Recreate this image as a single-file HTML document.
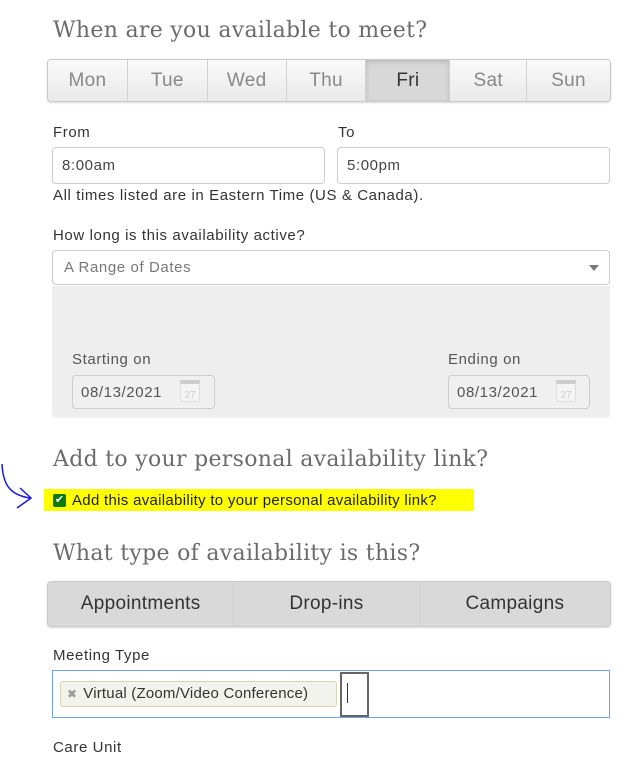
<!DOCTYPE html>
<html><head><style>
body{margin:0;width:632px;height:765px;background:#fff;position:relative;overflow:hidden;font-family:"Liberation Sans",sans-serif;color:#333;font-size:15px;letter-spacing:0.6px}
.a{position:absolute}
h2{position:absolute;margin:0;font-family:"DejaVu Serif",serif;font-weight:normal;color:#6b6b6b;font-size:22px;letter-spacing:0.3px}
.bar{position:absolute;display:flex;border:1px solid #c8c8c8;border-radius:4px;overflow:hidden;box-shadow:0 1px 2px rgba(0,0,0,.15);letter-spacing:0.3px}
.bar div{border-right:1px solid #d0d0d0;display:flex;align-items:center;justify-content:center;background:linear-gradient(#fafafa,#e9e9e9);color:#888;font-size:19px}
.bar div:last-child{border-right:none}
.inp{position:absolute;border:1px solid #ccc;border-radius:4px;background:#fff;box-sizing:border-box;padding-left:9px;display:flex;align-items:center;color:#444}
.cal{position:absolute;width:20px;height:22px;border:1px solid #ddd;background:#f4f4f4;color:#ccc;font-size:10px;display:flex;align-items:flex-end;justify-content:center;box-sizing:border-box;border-top:4px solid #ccc;letter-spacing:0}
</style></head><body>
<h2 style="left:53px;top:18px">When are you available to meet?</h2>
<div class="bar" style="left:47px;top:59px;width:562px;height:41px">
<div style="width:79px">Mon</div><div style="width:79px">Tue</div><div style="width:78px">Wed</div><div style="width:79px">Thu</div><div style="width:83px;background:#d8d8d8;color:#333;box-shadow:inset 0 2px 4px rgba(0,0,0,.15)">Fri</div><div style="width:76px">Sat</div><div style="width:83px">Sun</div>
</div>
<div class="a" style="left:53px;top:124px">From</div>
<div class="a" style="left:338px;top:124px">To</div>
<div class="inp" style="left:52px;top:147px;width:273px;height:37px">8:00am</div>
<div class="inp" style="left:337px;top:147px;width:273px;height:37px">5:00pm</div>
<div class="a" style="left:53px;top:187px">All times listed are in Eastern Time (US &amp; Canada).</div>
<div class="a" style="left:53px;top:227px">How long is this availability active?</div>
<div class="inp" style="left:52px;top:250px;width:558px;height:35px;color:#777;padding-left:11px">A Range of Dates<span class="a" style="right:10px;top:14px;border:5px solid transparent;border-top:6px solid #777;border-bottom:0"></span></div>
<div class="a" style="left:52px;top:286px;width:558px;height:132px;background:#eee;border-radius:0 0 4px 4px"></div>
<div class="a" style="left:72px;top:351px;color:#555">Starting on</div>
<div class="a" style="left:448px;top:351px;color:#555">Ending on</div>
<div class="inp" style="left:72px;top:375px;width:143px;height:34px;background:#f0f0f0;color:#555;padding-left:8px">08/13/2021</div>
<div class="cal" style="left:180px;top:380px">27</div>
<div class="inp" style="left:448px;top:375px;width:142px;height:34px;background:#f0f0f0;color:#555;padding-left:8px">08/13/2021</div>
<div class="cal" style="left:556px;top:380px">27</div>
<h2 style="left:53px;top:447px">Add to your personal availability link?</h2>
<svg class="a" style="left:0;top:460px" width="50" height="55"><path d="M2 4 C3 25 10 35 30 38 M20 28 L31 38 L17 48" stroke="#1a1ae0" stroke-width="1.5" fill="none"/></svg>
<div class="a" style="left:44px;top:489px;width:430px;height:22px;background:#ffff00"></div>
<div class="a" style="left:53px;top:494px;width:13px;height:13px;background:#0a7a0a;border-radius:2px;color:#fff;font-size:11px;line-height:13px;text-align:center;letter-spacing:0">✔</div>
<div class="a" style="left:72px;top:492px;color:#222;font-size:15px;letter-spacing:0.3px">Add this availability to your personal availability link?</div>
<h2 style="left:53px;top:541px">What type of availability is this?</h2>
<div class="bar" style="left:47px;top:581px;width:562px;height:44px">
<div style="width:186px;background:#d9d9d9;color:#333">Appointments</div><div style="width:185px;background:#d9d9d9;color:#333">Drop-ins</div><div style="width:191px;background:#d9d9d9;color:#333">Campaigns</div>
</div>
<div class="a" style="left:53px;top:647px">Meeting Type</div>
<div class="a" style="left:52px;top:670px;width:556px;height:46px;border:1px solid #6fa0e8"></div>
<div class="a" style="left:60px;top:681px;width:275px;height:24px;border:1px solid #d8d3b0;border-radius:3px;background:#f3f3ee;font-size:15px;line-height:24px;color:#333;letter-spacing:0.2px;white-space:nowrap"><span style="color:#999;font-size:12px;margin:0 6px 0 6px">✖</span>Virtual (Zoom/Video Conference)</div>
<div class="a" style="left:340px;top:672px;width:25px;height:41px;border:2px solid #666"></div>
<div class="a" style="left:347px;top:683px;width:1px;height:20px;background:#333"></div>
<div class="a" style="left:53px;top:739px">Care Unit</div>
</body></html>
